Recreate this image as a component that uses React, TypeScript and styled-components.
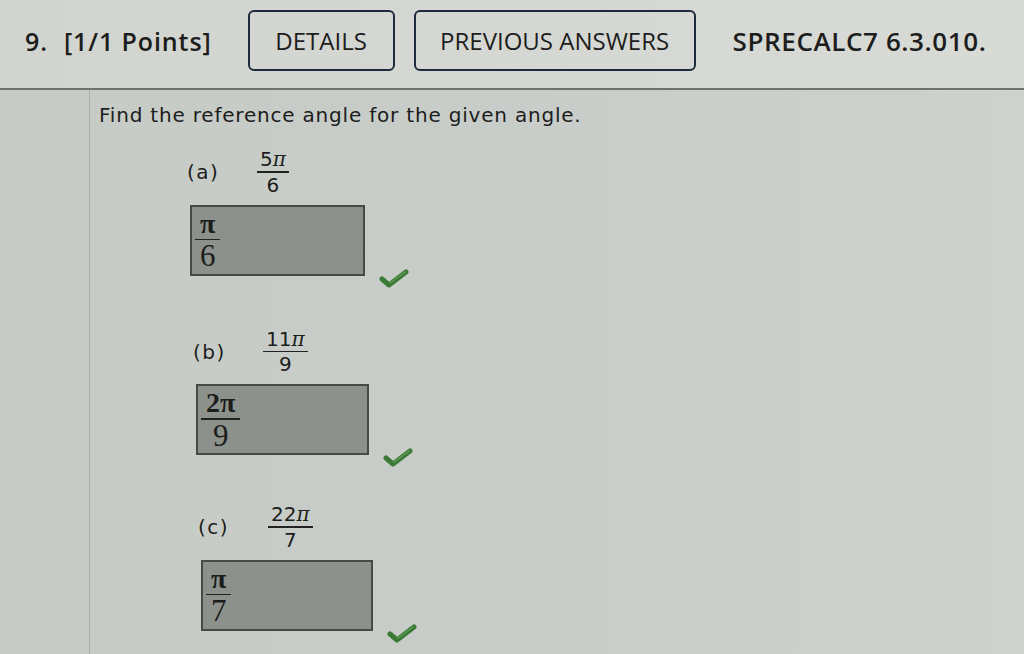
import React from "react";
import { createGlobalStyle, styled } from "styled-components";

const GlobalStyle = createGlobalStyle`
  html, body {
    margin: 0;
    padding: 0;
    background: #c9cdc9;
  }
  body {
    font-family: "DejaVu Sans", "Open Sans", sans-serif;
    color: #1c1d1c;
  }
`;

const Page = styled.div`
  width: 1024px;
  height: 654px;
  overflow: hidden;
  display: flex;
  flex-direction: column;
  background: linear-gradient(90deg, #c6cbc6 0%, #c9cdc9 50%, #ced1cd 100%);
`;

const Header = styled.div`
  height: 90px;
  flex-shrink: 0;
  display: flex;
  align-items: center;
  padding: 0 0 7px 25px;
  box-sizing: border-box;
  font-family: "Open Sans", "DejaVu Sans", sans-serif;
  background: linear-gradient(90deg, #d2d4cf 0%, #d6d8d3 60%, #d8dad5 100%);
  border-bottom: 2px solid #6e726e;
`;

const Title = styled.span`
  display: flex;
  gap: 16px;
  font-size: 25px;
  font-weight: 600;
  letter-spacing: 0.9px;
  margin-right: 36px;
  white-space: nowrap;
`;

const HeaderButton = styled.div<{ $width: number }>`
  width: ${(p) => p.$width}px;
  height: 61px;
  box-sizing: border-box;
  display: flex;
  align-items: center;
  justify-content: center;
  border: 2.5px solid #1d2a3c;
  border-radius: 6px;
  font-size: 24px;
  margin-right: 19px;
  white-space: nowrap;
`;

const Code = styled.span`
  font-size: 26px;
  font-weight: 600;
  letter-spacing: 0.6px;
  margin-left: 18px;
  white-space: nowrap;
`;

const Body = styled.div`
  flex: 1;
  display: flex;
`;

const Gutter = styled.div`
  width: 89px;
  flex-shrink: 0;
  border-right: 1.5px solid #a9ada9;
  background: #c8ccc8;
`;

const Content = styled.div`
  flex: 1;
  padding: 12px 0 0 9px;
  display: flex;
  flex-direction: column;
`;

const Prompt = styled.div`
  font-size: 20px;
  letter-spacing: 0.8px;
  line-height: 26px;
`;

const Part = styled.div<{ $indent: number; $top: number }>`
  margin-left: ${(p) => p.$indent}px;
  margin-top: ${(p) => p.$top}px;
  display: flex;
  flex-direction: column;
`;

const Question = styled.div`
  display: flex;
  align-items: center;
`;

const Label = styled.span`
  font-size: 20px;
  letter-spacing: 1.5px;
  width: 70px;
`;

const Fraction = styled.span<{ $serif?: boolean }>`
  display: inline-flex;
  flex-direction: column;
  align-items: center;
  font-family: ${(p) =>
    p.$serif ? '"Liberation Serif", "DejaVu Serif", serif' : '"DejaVu Sans", sans-serif'};
  font-size: ${(p) => (p.$serif ? 31 : 20)}px;
`;

const Num = styled.span<{ $serif?: boolean }>`
  line-height: ${(p) => (p.$serif ? 30 : 23)}px;
  padding: 0 ${(p) => (p.$serif ? 5 : 3)}px;
  font-weight: ${(p) => (p.$serif ? 700 : 400)};
  font-size: ${(p) => (p.$serif ? 28 : 20)}px;
`;

const Den = styled.span<{ $serif?: boolean }>`
  line-height: ${(p) => (p.$serif ? 32 : 24)}px;
`;

const Bar = styled.span`
  align-self: stretch;
  height: 1.5px;
  background: #222;
`;

const Pi = styled.i`
  font-family: "DejaVu Serif", serif;
  font-style: italic;
`;

const AnswerRow = styled.div`
  display: flex;
  align-items: flex-end;
  margin: 8px 0 0 3px;
`;

const AnswerBox = styled.div<{ $width: number }>`
  width: ${(p) => p.$width}px;
  height: 71px;
  box-sizing: border-box;
  border: 2px solid #454a45;
  background: #8c928b;
  padding: 2px 0 0 3px;
  display: flex;
  align-items: flex-start;
`;

const Check = styled.svg`
  width: 30px;
  height: 20px;
  margin: 0 0 -12px 14px;
`;

type PartData = {
  label: string;
  coef: string;
  den: string;
  answerNum: string;
  answerDen: string;
  indent: number;
  top: number;
  width: number;
};

const parts: PartData[] = [
  { label: "(a)", coef: "5", den: "6", answerNum: "π", answerDen: "6", indent: 88, top: 20, width: 175 },
  { label: "(b)", coef: "11", den: "9", answerNum: "2π", answerDen: "9", indent: 94, top: 52, width: 173 },
  { label: "(c)", coef: "22", den: "7", answerNum: "π", answerDen: "7", indent: 99, top: 48, width: 172 },
];

function CheckMark() {
  return (
    <Check viewBox="0 0 30 20">
      <path
        d="M3 11 L10 17 L27 4"
        fill="none"
        stroke="#3b7a36"
        strokeWidth="5"
        strokeLinecap="round"
        strokeLinejoin="round"
      />
      <path d="M11 15 L26 4" fill="none" stroke="#5e9a55" strokeWidth="1.5" strokeLinecap="round" />
    </Check>
  );
}

function App() {
  return (
    <>
      <GlobalStyle />
      <Page>
        <Header>
          <Title>
            <span>9.</span>
            <span>[1/1 Points]</span>
          </Title>
          <HeaderButton $width={147}>DETAILS</HeaderButton>
          <HeaderButton $width={282}>PREVIOUS ANSWERS</HeaderButton>
          <Code>SPRECALC7 6.3.010.</Code>
        </Header>
        <Body>
          <Gutter />
          <Content>
            <Prompt>Find the reference angle for the given angle.</Prompt>
            {parts.map((p) => (
              <Part key={p.label} $indent={p.indent} $top={p.top}>
                <Question>
                  <Label>{p.label}</Label>
                  <Fraction>
                    <Num>
                      {p.coef}
                      <Pi>π</Pi>
                    </Num>
                    <Bar />
                    <Den>{p.den}</Den>
                  </Fraction>
                </Question>
                <AnswerRow>
                  <AnswerBox $width={p.width}>
                    <Fraction $serif>
                      <Num $serif>{p.answerNum}</Num>
                      <Bar />
                      <Den $serif>{p.answerDen}</Den>
                    </Fraction>
                  </AnswerBox>
                  <CheckMark />
                </AnswerRow>
              </Part>
            ))}
          </Content>
        </Body>
      </Page>
    </>
  );
}

export default App;
